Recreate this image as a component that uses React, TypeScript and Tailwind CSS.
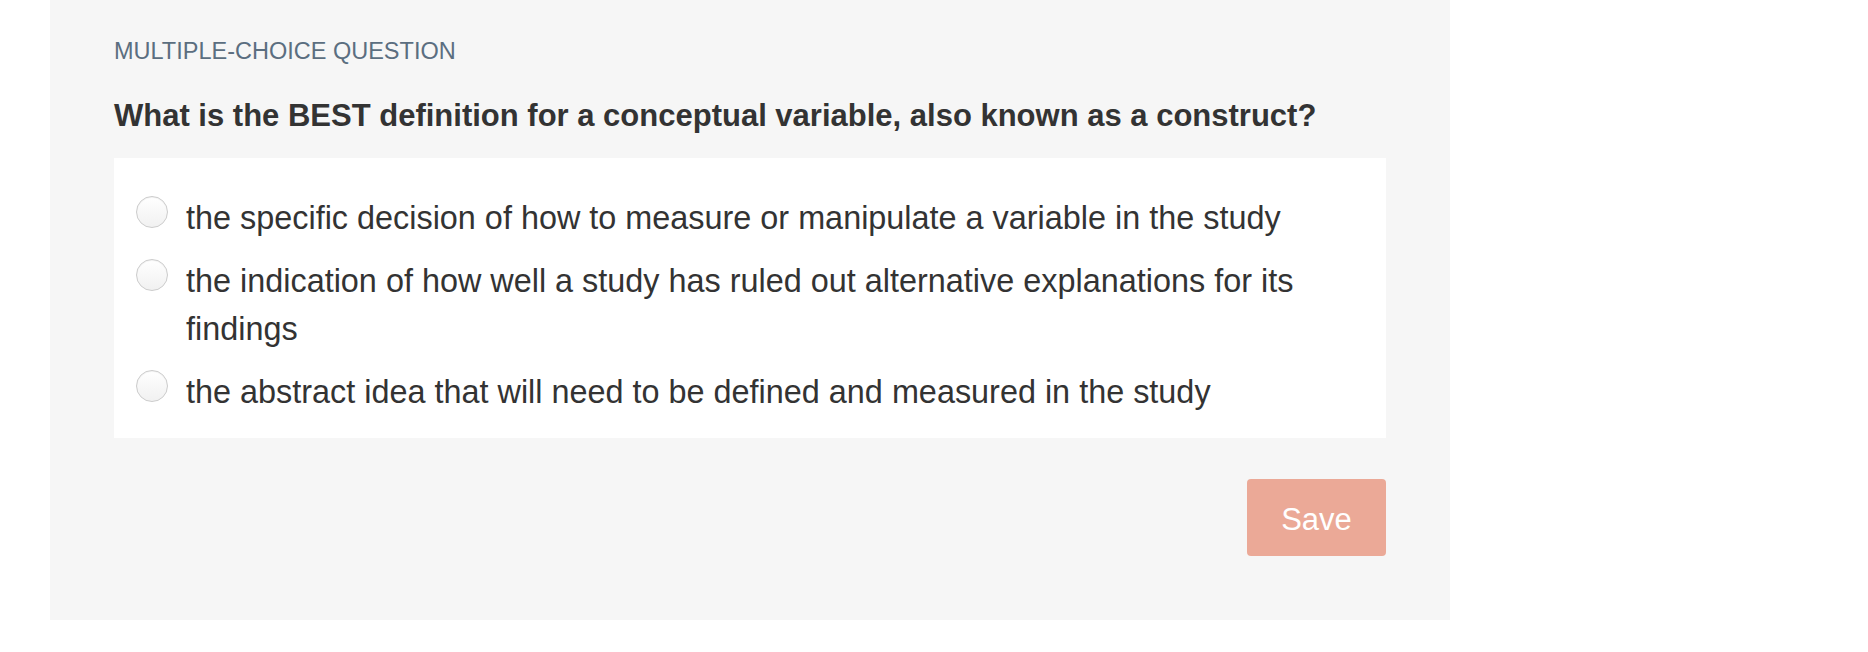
import React from "react";

const options = [
  "the specific decision of how to measure or manipulate a variable in the study",
  "the indication of how well a study has ruled out alternative explanations for its findings",
  "the abstract idea that will need to be defined and measured in the study",
];

export default function App() {
  return (
    <div className="w-[1868px] h-[652px] bg-white font-['Liberation_Sans',Arial,sans-serif]">
      <div className="ml-[50px] w-[1400px] h-[620px] bg-[#f6f6f6] px-[64px] pt-[38px] flex flex-col">
        <div className="text-[23.5px] leading-[26px] text-[#5b6e80]">MULTIPLE-CHOICE QUESTION</div>
        <div className="mt-[34px] text-[31px] leading-[36px] font-bold text-[#333333]">
          What is the BEST definition for a conceptual variable, also known as a construct?
        </div>
        <div className="mt-[24px] bg-white pt-[36px] pb-[22px] pl-[22px] pr-[40px] flex flex-col gap-[15px]">
          {options.map((o) => (
            <label key={o} className="flex items-start">
              <span className="mt-[2px] w-[32px] h-[32px] shrink-0 rounded-full border border-[#cccccc] bg-gradient-to-b from-white to-[#f1f1f1] shadow-[inset_0_1px_1px_rgba(0,0,0,0.05)]" />
              <span className="ml-[18px] text-[32.4px] leading-[48px] text-[#333333]">{o}</span>
            </label>
          ))}
        </div>
        <div className="mt-[41px] flex justify-end">
          <button className="w-[139px] h-[77px] rounded-[4px] bg-[#eba997] text-white text-[31px] leading-none pt-[4px]">
            Save
          </button>
        </div>
      </div>
    </div>
  );
}
